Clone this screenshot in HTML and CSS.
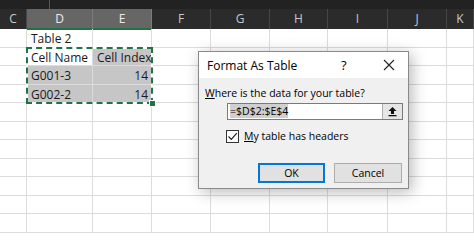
FILE: index.html
```html
<!DOCTYPE html>
<html lang="en">
<head>
    <meta charset="UTF-8">
    <title>Format As Table</title>
    <link rel="stylesheet" href="styles.css">
</head>
<body>
    <div class="topbar"><div class="namebox"></div></div>

    <div class="heads">
        <div class="colhead">C</div>
        <div class="colhead sel">D</div>
        <div class="colhead sel">E</div>
        <div class="colhead">F</div>
        <div class="colhead">G</div>
        <div class="colhead">H</div>
        <div class="colhead">I</div>
        <div class="colhead">J</div>
        <div class="colhead">K</div>
    </div>

    <div class="grid">
        <span></span><span>Table 2</span><span></span><span></span><span></span><span></span><span></span><span></span><span></span>
        <span></span><span class="active">Cell Name</span><span class="picked">Cell Index</span><span></span><span></span><span></span><span></span><span></span><span></span>
        <span></span><span class="picked">G001-3</span><span class="picked num">14</span><span></span><span></span><span></span><span></span><span></span><span></span>
        <span></span><span class="picked">G002-2</span><span class="picked num">14</span><span></span><span></span><span></span><span></span><span></span><span></span>
        <span></span><span></span><span></span><span></span><span></span><span></span><span></span><span></span><span></span>
        <span></span><span></span><span></span><span></span><span></span><span></span><span></span><span></span><span></span>
        <span></span><span></span><span></span><span></span><span></span><span></span><span></span><span></span><span></span>
        <span></span><span></span><span></span><span></span><span></span><span></span><span></span><span></span><span></span>
        <span></span><span></span><span></span><span></span><span></span><span></span><span></span><span></span><span></span>
        <span></span><span></span><span></span><span></span><span></span><span></span><span></span><span></span><span></span>
        <span></span><span></span><span></span><span></span><span></span><span></span><span></span><span></span><span></span>
        <div class="marquee"><i class="handle"></i></div>
    </div>

    <div class="dialog">
        <div class="dialog-title">
            <span class="title-text">Format As Table</span>
            <span class="help">?</span>
            <svg class="close" width="12" height="12" viewBox="0 0 12 12">
                <path d="M1 1 L11 11 M11 1 L1 11" stroke="#222" stroke-width="1.1" fill="none"/>
            </svg>
        </div>
        <div class="dialog-body">
            <div class="prompt"><u>W</u>here is the data for your table?</div>
            <div class="range">
                <span class="range-text"><span class="range-sel">=$D$2:$E$4</span></span>
                <span class="collapse">
                    <svg width="11" height="11" viewBox="0 0 11 11">
                        <path d="M5.5 1 L9.5 5 H7 V8 H4 V5 H1.5 Z" fill="#111"/>
                        <rect x="1.5" y="9" width="8" height="1.3" fill="#111"/>
                    </svg>
                </span>
            </div>
            <label class="check">
                <span class="box">
                    <svg width="11" height="11" viewBox="0 0 11 11">
                        <path d="M1.5 5.5 L4.3 8.3 L9.8 2.2" stroke="#222" stroke-width="1.2" fill="none"/>
                    </svg>
                </span>
                <span><u>M</u>y table has headers</span>
            </label>
            <div class="buttons">
                <button class="btn default">OK</button>
                <button class="btn">Cancel</button>
            </div>
        </div>
    </div>
</body>
</html>
```

FILE: styles.css
```css
body {
    margin: 0;
    background: #fff;
    font-family: "Open Sans", "Noto Sans", sans-serif;
    font-size: 12px;
    color: #1a1a1a;
    overflow: hidden;
}
.topbar {
    height: 9px;
    background: #222;
}
.namebox {
    width: 50px;
    height: 9px;
    border-right: 1px solid #555;
    box-sizing: border-box;
}
.heads,
.grid {
    display: grid;
    grid-template-columns: 27px 66px 59px 59px 59px 58px 60px 59px 1fr;
}
.heads {
    height: 20px;
    background: #2b2b2b;
}
.colhead {
    border-right: 1px solid #474747;
    color: #c9c9c9;
    text-align: center;
    line-height: 19px;
    box-sizing: border-box;
}
.colhead.sel {
    background: #666;
    color: #ececec;
    border-right-color: #7c7c7c;
    border-bottom: 2px solid #217346;
}
.grid {
    position: relative;
    grid-template-rows: repeat(11, 18.5px);
}
.grid span {
    border-right: 1px solid #dcdcdc;
    border-bottom: 1px solid #dcdcdc;
    box-sizing: border-box;
    padding: 0 3px 0 4px;
    line-height: 19px;
    white-space: nowrap;
    overflow: hidden;
}
.grid .picked {
    background: #c6c6c6;
}
.grid .active {
    background: #fff;
}
.grid .num {
    text-align: right;
}
.marquee {
    position: absolute;
    grid-column: 2 / 4;
    grid-row: 2 / 5;
    inset: -1px -1px -1px -1px;
    border: 2px solid #fff;
    pointer-events: none;
}
.marquee::after {
    content: "";
    position: absolute;
    inset: -2px;
    border: 2px dashed #217346;
}
.handle {
    position: absolute;
    right: -5px;
    bottom: -5px;
    width: 5px;
    height: 5px;
    background: #217346;
    border: 1px solid #fff;
    z-index: 1;
}
.dialog {
    position: absolute;
    left: 198px;
    top: 51px;
    width: 211px;
    height: 138px;
    box-sizing: border-box;
    border: 1px solid #8a8a8a;
    background: #f0f0f0;
    box-shadow: 3px 3px 14px rgba(0, 0, 0, 0.28);
    color: #000;
}
.dialog-title {
    display: flex;
    align-items: center;
    height: 26px;
    background: #fff;
    padding-left: 8px;
}
.title-text {
    flex: 1;
}
.help {
    width: 12px;
    margin-right: 30px;
    font-size: 13px;
}
.close {
    margin-right: 13px;
}
.dialog-body {
    padding: 7px 0 0 6px;
    font-size: 10.5px;
}
.prompt {
    line-height: 17px;
}
.range {
    display: flex;
    margin: 1px 0 0 22px;
    width: 176px;
    height: 17px;
    box-sizing: border-box;
    border: 1px solid #7a7a7a;
    background: #fff;
}
.range-text {
    flex: 1;
    padding-left: 2px;
    line-height: 15px;
}
.range-sel {
    background: #cfcfcf;
}
.collapse {
    width: 19px;
    border-left: 1px solid #adadad;
    background: #e6e6e6;
    display: flex;
    align-items: center;
    justify-content: center;
}
.check {
    display: flex;
    align-items: center;
    gap: 5px;
    margin: 8px 0 0 21px;
    height: 16px;
}
.box {
    width: 13px;
    height: 13px;
    box-sizing: border-box;
    border: 1px solid #333;
    background: #fff;
    display: flex;
    align-items: center;
    justify-content: center;
}
.buttons {
    display: flex;
    gap: 9px;
    margin: 19px 0 0 53px;
}
.btn {
    width: 68px;
    height: 20px;
    box-sizing: border-box;
    border: 1px solid #adadad;
    background: #e1e1e1;
    font-family: inherit;
    font-size: 10.5px;
    padding: 0;
    color: #000;
}
.btn.default {
    width: 67px;
    border: 2px solid #0078d7;
}
```
